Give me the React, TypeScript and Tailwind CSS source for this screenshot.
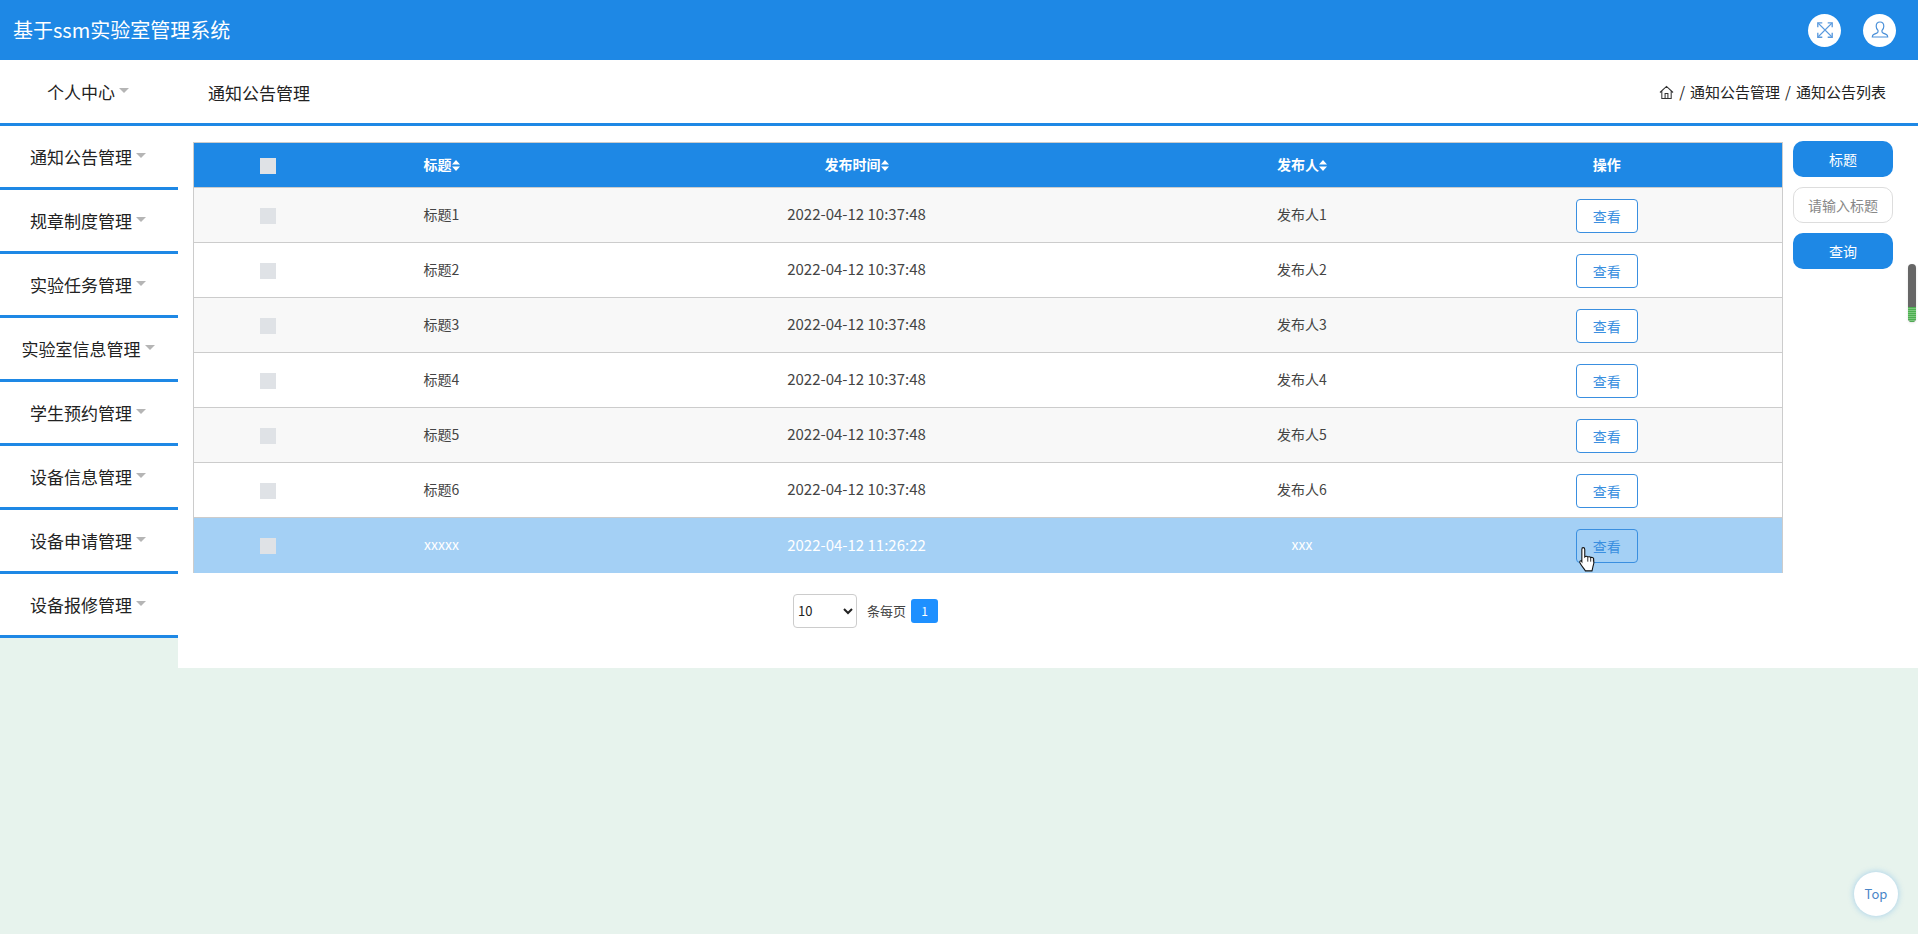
const menus = [
  "通知公告管理",
  "规章制度管理",
  "实验任务管理",
  "实验室信息管理",
  "学生预约管理",
  "设备信息管理",
  "设备申请管理",
  "设备报修管理",
]

const rows = [
  { title: "标题1", time: "2022-04-12 10:37:48", author: "发布人1" },
  { title: "标题2", time: "2022-04-12 10:37:48", author: "发布人2" },
  { title: "标题3", time: "2022-04-12 10:37:48", author: "发布人3" },
  { title: "标题4", time: "2022-04-12 10:37:48", author: "发布人4" },
  { title: "标题5", time: "2022-04-12 10:37:48", author: "发布人5" },
  { title: "标题6", time: "2022-04-12 10:37:48", author: "发布人6" },
  { title: "xxxxx", time: "2022-04-12 11:26:22", author: "xxx" },
]

function Caret() {
  return <span className="ml-[4px] mb-[2px] inline-block h-0 w-0 border-x-[5px] border-t-[5px] border-x-transparent border-t-[#b5b5b5]" />
}

function SortIcon() {
  return (
    <svg width="8" height="11" viewBox="0 0 8 11" className="inline-block align-[-1px]">
      <path d="M4 0 8 4.5H0Z M0 6.5H8L4 11Z" fill="#fff" />
    </svg>
  )
}

function Check() {
  return <span className="inline-block h-4 w-4 bg-[#dfe2e6] align-middle" />
}

export default function App() {
  return (
    <div className="relative h-[934px] overflow-hidden bg-[#e7f3ed] font-['Noto_Sans_CJK_SC','Microsoft_YaHei',sans-serif] text-[#444]">
      {/* Top bar */}
      <header className="flex h-[60px] items-center justify-between bg-[#1e88e5] pl-[13px] pr-[22px]">
        <h1 className="text-[20px] font-normal text-white">基于ssm实验室管理系统</h1>
        <div className="flex items-center gap-[22px]">
          <div className="flex h-[33px] w-[33px] items-center justify-center rounded-full bg-white">
            <svg width="18" height="18" viewBox="0 0 20 20" fill="none" stroke="#5a9ade" strokeWidth="1.2">
              <path d="M2.500 2.500 17.500 17.500M17.500 2.500 2.500 17.500" />
              <path d="M2 7V2H7M13 2H18V7M18 13V18H13M7 18H2V13" strokeWidth="1.5" />
            </svg>
          </div>
          <div className="flex h-[33px] w-[33px] items-center justify-center rounded-full bg-white">
            <svg width="20" height="20" viewBox="0 0 20 20" fill="none" stroke="#4a90d9" strokeWidth="1.2">
              <path d="M10 2c-2.400 0-3.800 1.800-3.800 4.200 0 1.800.8 3.200 1.800 4.200v1.400c0 .7-.5 1-1.200 1.300l-3 1.300c-1 .4-1.500 1.200-1.500 2.600h15.400c0-1.400-.5-2.200-1.500-2.600l-3-1.300c-.7-.3-1.200-.6-1.200-1.300v-1.400c1-1 1.800-2.400 1.800-4.200C13.800 3.800 12.400 2 10 2Z" />
            </svg>
          </div>
        </div>
      </header>

      <div className="flex items-start">
        {/* Sidebar */}
        <aside className="w-[178px] shrink-0 bg-white">
          <div className="flex h-[66px] items-center justify-center border-b-[3px] border-[#1e88e5] pr-[2px] text-[17px] text-[#222]">
            个人中心
            <Caret />
          </div>
          {menus.map((m) => (
            <div key={m} className="flex h-[64px] items-center justify-center border-b-[3px] border-[#1e88e5] pr-[2px] text-[17px] text-[#222]">
              {m}
              <Caret />
            </div>
          ))}
        </aside>

        {/* Main */}
        <main className="h-[608px] flex-1 bg-white">
          <div className="flex h-[66px] items-center justify-between border-b-[3px] border-[#1e88e5] pl-[30px] pr-[32px] pt-[1px] text-[#222]">
            <span className="pt-[2px] text-[17px]">通知公告管理</span>
            <div className="flex items-center gap-[5px] text-[15px]">
              <svg width="15" height="15" viewBox="0 0 16 16" fill="none" stroke="#333" strokeWidth="1.1">
                <path d="M1 8 8 1.500 15 8M3 6.500V14.500H13V6.500M6.500 14.500V9H9.500V14.500" />
              </svg>
              <span>/</span>
              <span>通知公告管理</span>
              <span>/</span>
              <span>通知公告列表</span>
            </div>
          </div>

          <div className="flex items-start pl-[15px] pt-[15px]">
            <div className="w-[1590px]">
              <table className="mt-px w-[1590px] table-fixed border-x border-t border-[#ccc] text-center text-[14px]">
                <thead>
                  <tr className="h-[45px] bg-[#1e88e5] text-white">
                    <th className="w-[149px] pb-[2px]"><Check /></th>
                    <th className="w-[198px] pb-[1px] font-bold">标题<SortIcon /></th>
                    <th className="w-[632px] pb-[1px] font-bold">发布时间<SortIcon /></th>
                    <th className="w-[259px] pb-[1px] font-bold">发布人<SortIcon /></th>
                    <th className="pb-[1px] font-bold">操作</th>
                  </tr>
                </thead>
                <tbody>
                  {rows.map((r, i) => {
                    const hover = i === 6
                    return (
                      <tr
                        key={r.title}
                        className={`h-[55px] border-t border-[#ccc] ${hover ? "bg-[#a4d0f5] text-white" : i % 2 === 0 ? "bg-[#f8f8f8]" : "bg-white"}`}
                      >
                        <td className="pb-[2px]"><Check /></td>
                        <td className="pb-[1px]">{r.title}</td>
                        <td className="pb-[1px] text-[15px]">{r.time}</td>
                        <td className="pb-[1px]">{r.author}</td>
                        <td>
                          <button className={`mt-[2px] h-[34px] w-[62px] rounded-[4px] border border-[#3a8fe0] text-[14px] text-[#3a8fe0] ${hover ? "" : "bg-white"}`}>
                            查看
                          </button>
                        </td>
                      </tr>
                    )
                  })}
                </tbody>
              </table>

              {/* Pagination */}
              <div className="mt-[21px] flex items-center pl-[600px] text-[13px]">
                <select className="h-[34px] w-[64px] rounded-[4px] border border-[#ccc] bg-white text-[13px] text-[#222]" defaultValue="10">
                  <option value="10">10</option>
                </select>
                <span className="ml-[10px] text-[#444]">条每页</span>
                <span className="ml-[5px] flex h-[24px] w-[27px] items-center justify-center rounded-[3px] bg-[#1e90ff] text-[12px] text-white">1</span>
              </div>
            </div>

            {/* Search */}
            <div className="ml-[10px] flex w-[100px] flex-col gap-[10px]">
              <div className="flex h-[36px] items-center justify-center rounded-[10px] bg-[#1e88e5] text-[14px] text-white">标题</div>
              <input
                placeholder="请输入标题"
                className="h-[36px] w-full rounded-[10px] border border-[#ddd] bg-white text-center text-[14px] placeholder:text-[#888]"
              />
              <button className="h-[36px] rounded-[10px] bg-[#1e88e5] text-[14px] text-white">查询</button>
            </div>
          </div>
        </main>
      </div>

      {/* Page scrollbar thumb */}
      <div className="absolute left-[1908px] top-[264px] h-[58px] w-2 overflow-hidden rounded bg-[#666] shadow">
        <div className="absolute bottom-0 h-[15px] w-full bg-[repeating-linear-gradient(#4caf50_0px,#4caf50_1px,#7bc67e_1px,#7bc67e_2px)]" />
      </div>

      {/* Back to top */}
      <div className="absolute left-[1854px] top-[872px] flex h-[44px] w-[44px] items-center justify-center rounded-full bg-white text-[13px] text-[#4a86c8] shadow-[0_0_6px_rgba(30,136,229,0.35)]">
        Top
      </div>

      {/* Mouse pointer */}
      <svg width="20" height="27" viewBox="0 0 18 25" className="absolute left-[1578px] top-[546px]">
        <path
          d="M4.500 1.500c1 0 1.500.7 1.500 1.700V10c.5-.6 2.200-.7 2.800.2.700-.5 2.200-.4 2.700.5.800-.4 2.300-.2 2.700.9.400 2 .3 5.400-.7 7.900l-.8 3.500H6.500C5 20.500 3 18.500 1.500 15.500c-.5-1.200.5-2.300 1.500-1.500l.3.500V3.200c0-1 .6-1.700 1.200-1.700Z"
          fill="#fff"
          stroke="#111"
          strokeWidth="1"
        />
        <path d="M8.800 10.500v4M11.500 11v3.500M14 11.500v3" stroke="#111" strokeWidth="0.8" />
      </svg>
    </div>
  )
}
